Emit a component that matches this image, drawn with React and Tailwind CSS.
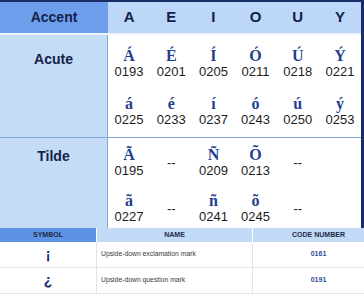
const letters = ['A', 'E', 'I', 'O', 'U', 'Y'];

// null = "--", undefined = empty cell
const groups = [
  {
    label: 'Acute',
    pad: 'pt-[13px] pb-[10px] gap-[17px]',
    labelPad: 'pt-[16px]',
    rows: [
      [['Á', '0193'], ['É', '0201'], ['Í', '0205'], ['Ó', '0211'], ['Ú', '0218'], ['Ý', '0221']],
      [['á', '0225'], ['é', '0233'], ['í', '0237'], ['ó', '0243'], ['ú', '0250'], ['ý', '0253']],
    ],
  },
  {
    label: 'Tilde',
    pad: 'pt-[9px] pb-[4px] gap-[15px]',
    labelPad: 'pt-[10px]',
    rows: [
      [['Ã', '0195'], null, ['Ñ', '0209'], ['Õ', '0213'], null, undefined],
      [['ã', '0227'], null, ['ñ', '0241'], ['õ', '0245'], null, undefined],
    ],
  },
];

const symbols = [
  { sym: '¡', name: 'Upside-down exclamation mark', code: '0161' },
  { sym: '¿', name: 'Upside-down question mark', code: '0191' },
];

const Entry = ({ item }) => {
  if (item === undefined) return <div />;
  if (item === null) {
    return (
      <div className="flex items-center justify-center text-[13px] text-[#222]">--</div>
    );
  }
  return (
    <div className="flex flex-col items-center">
      <span className="font-['Liberation_Serif',serif] font-bold text-[16px] leading-[16px] text-[#1f3f8f]">
        {item[0]}
      </span>
      <span className="text-[13px] leading-[15px] text-[#1c1c1c]">{item[1]}</span>
    </div>
  );
};

export default function App() {
  return (
    <div className="w-[364px] h-[297px] overflow-hidden bg-white font-['Liberation_Sans',Arial,sans-serif]">
      {/* Accent table */}
      <div className="w-[364px] border-t-2 border-r-[3px] border-[#1b2d66]">
        {/* Header */}
        <div className="grid grid-cols-[108px_repeat(6,1fr)] h-[33px] border-b-2 border-[#eef3fa]">
          <div className="flex items-center justify-center bg-[#6d9eec] text-[14px] font-bold text-[#14214a]">
            Accent
          </div>
          {letters.map((l) => (
            <div
              key={l}
              className="flex items-center justify-center bg-[#bcd7f8] text-[15px] font-bold text-[#14214a]"
            >
              {l}
            </div>
          ))}
        </div>

        {/* Body */}
        {groups.map((g, i) => (
          <div key={g.label} className={`flex ${i > 0 ? 'border-t border-[#7fa8e0]' : ''}`}>
            <div
              className={`w-[108px] shrink-0 bg-[#c5dcf6] border-r border-[#7fa8e0] text-center text-[14px] leading-[16px] font-bold text-[#14214a] ${g.labelPad}`}
            >
              {g.label}
            </div>
            <div className={`flex-1 flex flex-col ${g.pad}`}>
              {g.rows.map((row, r) => (
                <div key={r} className="grid grid-cols-6 h-[31px]">
                  {row.map((item, c) => (
                    <Entry key={c} item={item} />
                  ))}
                </div>
              ))}
            </div>
          </div>
        ))}
      </div>

      {/* Symbols table */}
      <div className="w-[384px]">
        <div className="grid grid-cols-[96px_156px_1fr] h-[14px] text-[7px] font-bold uppercase text-[#1e2a48]">
          <div className="flex items-center justify-center bg-[#5c93e2]">Symbol</div>
          <div className="flex items-center justify-center bg-[#c3daf6] border-l border-white">Name</div>
          <div className="flex items-center justify-center bg-[#c3daf6] border-l border-white">Code Number</div>
        </div>
        {symbols.map((s) => (
          <div
            key={s.code}
            className="grid grid-cols-[96px_156px_1fr] h-[26px] border-b border-[#e3e3e3]"
          >
            <div className="flex items-center justify-center text-[14px] font-bold text-[#1a2b6b]">
              {s.sym}
            </div>
            <div className="flex items-center pl-[4px] border-l border-[#e3e3e3] text-[6.8px] text-[#3a3a3a]">
              {s.name}
            </div>
            <div className="flex items-center justify-center border-l border-[#e3e3e3] text-[7px] font-bold text-[#2d4a9a]">
              {s.code}
            </div>
          </div>
        ))}
      </div>
    </div>
  );
}
